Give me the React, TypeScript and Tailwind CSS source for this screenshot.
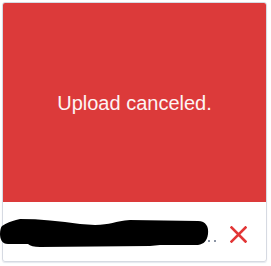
import React from "react";

function Redaction() {
  return (
    <svg width="210" height="32" viewBox="0 0 210 32" className="block shrink-0">
      <path
        d="M2 9 C6 6 12 4 16 3 L20 2 C40 2 60 4 80 7 L95 8 C110 8 115 4 130 3 L198 4 C206 4 209 10 208 17 C207 24 204 27 198 28 L160 28 L150 29 L40 30 C34 30 30 29 28 27 L8 27 C2 27 0 22 0 17 C0 13 1 10 2 9 Z"
        fill="#000"
      />
    </svg>
  );
}

export default function App() {
  return (
    <div className="w-[271px] h-[266px] bg-white p-[2px] font-['Liberation_Sans',Arial,sans-serif]">
      <div className="w-[265px] h-[260px] border border-[#d6dae2] rounded-[3px] flex flex-col shadow-[0_1px_1px_rgba(180,190,210,0.35)]">
        <div className="h-[199px] bg-[#dc3a3a] rounded-t-[2px] flex items-center justify-center">
          <span className="text-[#fdf4f4] text-[20px] leading-none pt-[1px]">Upload canceled.</span>
        </div>
        <div className="flex-1 flex items-center pt-[3px]">
          <div className="-ml-[3px] flex items-end">
            <Redaction />
            <div className="flex gap-[4px] mb-[7px] -ml-[2px]">
              <span className="w-[2px] h-[2px] bg-[#8c95a5]" />
              <span className="w-[2px] h-[2px] bg-[#8c95a5]" />
            </div>
          </div>
          <button className="ml-auto mr-[19px] mt-[2px]">
            <svg width="17" height="17" viewBox="0 0 17 17" className="block">
              <path d="M1.5 1.5 L15.5 15.5 M15.5 1.5 L1.5 15.5" stroke="#e23636" strokeWidth="2.6" strokeLinecap="square" />
            </svg>
          </button>
        </div>
      </div>
    </div>
  );
}
